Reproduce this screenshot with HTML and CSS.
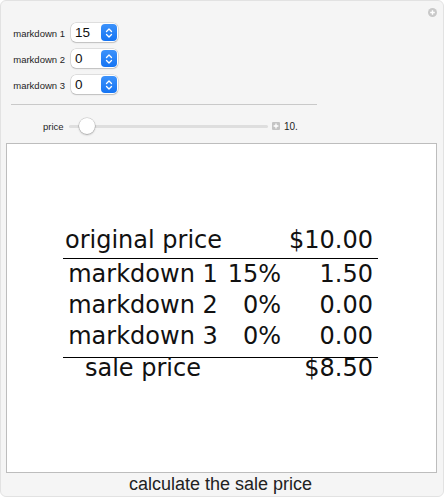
FILE: index.html
```html
<!DOCTYPE html>
<html>
<head>
<meta charset="utf-8">
<link rel="stylesheet" href="styles.css">
</head>
<body>
<div class="panel">
  <span class="corner-btn"><svg width="9" height="9" viewBox="0 0 9 9"><circle cx="4.5" cy="4.5" r="4.5" fill="#c9c9c9"/><path d="M4.5 2.2v4.6M2.2 4.5h4.6" stroke="#fff" stroke-width="1.4"/></svg></span>
  <div class="controls">
    <div class="ctrl-row">
      <span class="ctrl-label">markdown 1</span>
      <div class="select"><span class="sel-val">15</span><span class="sel-btn"><svg width="8" height="12" viewBox="0 0 8 12"><path d="M1.5 4.5L4 2l2.5 2.5M1.5 7.5L4 10l2.5-2.5" fill="none" stroke="#fff" stroke-width="1.3" stroke-linecap="round" stroke-linejoin="round"/></svg></span></div>
    </div>
    <div class="ctrl-row">
      <span class="ctrl-label">markdown 2</span>
      <div class="select"><span class="sel-val">0</span><span class="sel-btn"><svg width="8" height="12" viewBox="0 0 8 12"><path d="M1.5 4.5L4 2l2.5 2.5M1.5 7.5L4 10l2.5-2.5" fill="none" stroke="#fff" stroke-width="1.3" stroke-linecap="round" stroke-linejoin="round"/></svg></span></div>
    </div>
    <div class="ctrl-row">
      <span class="ctrl-label">markdown 3</span>
      <div class="select"><span class="sel-val">0</span><span class="sel-btn"><svg width="8" height="12" viewBox="0 0 8 12"><path d="M1.5 4.5L4 2l2.5 2.5M1.5 7.5L4 10l2.5-2.5" fill="none" stroke="#fff" stroke-width="1.3" stroke-linecap="round" stroke-linejoin="round"/></svg></span></div>
    </div>
    <div class="separator"></div>
    <div class="slider-row">
      <span class="slider-label">price</span>
      <div class="track"><span class="thumb"></span></div>
      <span class="plus-icon"><svg width="8" height="8" viewBox="0 0 8 8"><rect width="8" height="8" rx="1" fill="#c4c4c4"/><path d="M4 1.6v4.8M1.6 4h4.8" stroke="#fff" stroke-width="1.3"/></svg></span>
      <span class="slider-val">10.</span>
    </div>
  </div>
  <div class="output">
    <table class="calc">
      <colgroup><col class="c1"><col class="c2"><col class="c3"></colgroup>
      <tr class="r-orig"><td class="t1">original price</td><td class="t2"></td><td class="t3">$10.00</td></tr>
      <tr class="r-md"><td class="t1">markdown 1</td><td class="t2">15%</td><td class="t3">1.50</td></tr>
      <tr class="r-md"><td class="t1">markdown 2</td><td class="t2">0%</td><td class="t3">0.00</td></tr>
      <tr class="r-md r-last"><td class="t1">markdown 3</td><td class="t2">0%</td><td class="t3">0.00</td></tr>
      <tr class="r-sale"><td class="t1">sale price</td><td class="t2"></td><td class="t3">$8.50</td></tr>
    </table>
  </div>
  <div class="caption">calculate the sale price</div>
</div>
</body>
</html>
```
FILE: styles.css
```css
html, body {
  margin: 0;
  padding: 0;
  background: #ffffff;
}
body {
  font-family: "Liberation Sans", Arial, sans-serif;
  color: #1e1e1e;
}
.panel {
  position: relative;
  box-sizing: border-box;
  width: 444px;
  height: 497px;
  background: #f5f5f5;
  border: 1px solid #e2e2e2;
  border-radius: 6px;
  padding: 22px 6px 0 5px;
}
.corner-btn {
  position: absolute;
  top: 7px;
  right: 6px;
  width: 9px;
  height: 9px;
  display: block;
  line-height: 0;
}
.controls {
  padding-left: 5px;
  display: flex;
  flex-direction: column;
}
.ctrl-row {
  display: flex;
  align-items: center;
  height: 19px;
  margin-bottom: 7px;
}
.ctrl-label {
  width: 54px;
  text-align: right;
  font-size: 9.5px;
  margin-right: 6px;
  padding-top: 2px;
}
.select {
  position: relative;
  width: 47px;
  height: 19px;
  box-sizing: border-box;
  background: #fff;
  border-radius: 5px;
  box-shadow: 0 0 0 0.5px rgba(0,0,0,0.18), 0 1px 1.5px rgba(0,0,0,0.15);
  display: flex;
  align-items: center;
  justify-content: space-between;
  padding: 0 1px 0 4px;
}
.sel-val {
  font-size: 13.5px;
  color: #111;
}
.sel-btn {
  width: 16px;
  height: 17px;
  border-radius: 4px;
  background: linear-gradient(#3c92fb, #1574f3);
  display: flex;
  align-items: center;
  justify-content: center;
}
.separator {
  width: 306px;
  height: 1px;
  background: #c9c9c9;
  margin-top: 3px;
}
.slider-row {
  display: flex;
  align-items: center;
  height: 16px;
  margin-top: 13px;
  padding-left: 32px;
}
.slider-label {
  font-size: 9.5px;
  width: 21px;
  margin-right: 5px;
}
.track {
  position: relative;
  width: 199px;
  height: 3px;
  border-radius: 2px;
  background: #dedede;
}
.thumb {
  position: absolute;
  left: 10px;
  top: -7px;
  width: 16px;
  height: 16px;
  border-radius: 50%;
  background: #fff;
  box-shadow: 0 0 0 0.5px rgba(0,0,0,0.2), 0 1px 2px rgba(0,0,0,0.25);
}
.plus-icon {
  margin-left: 4px;
  width: 8px;
  height: 8px;
  line-height: 0;
}
.slider-val {
  margin-left: 4px;
  font-size: 10px;
}
.output {
  box-sizing: border-box;
  width: 431px;
  height: 330px;
  margin-top: 9px;
  background: #fff;
  border: 1px solid #bdbdbd;
  padding-top: 81px;
}
.calc {
  border-collapse: collapse;
  table-layout: fixed;
  width: 315px;
  margin-left: 56px;
  font-family: "DejaVu Sans", Verdana, sans-serif;
  font-size: 24px;
  color: #111;
}
.c1 { width: 162px; }
.c2 { width: 60px; }
.c3 { width: 93px; }
.calc td {
  padding: 0;
  white-space: nowrap;
  line-height: 31px;
}
.t1 { text-align: center; padding-left: 2px !important; padding-right: 4px !important; }
.t2 { text-align: right; padding-right: 4px !important; }
.t3 { text-align: right; padding-right: 5px !important; }
.r-orig td {
  padding-bottom: 2px;
  border-bottom: 1px solid #000;
}
.r-last td {
  padding-bottom: 5px;
  border-bottom: 1px solid #000;
}
.r-sale td {
  line-height: 20px;
}
.caption {
  text-align: center;
  font-size: 18px;
  color: #222;
  margin-top: 1px;
  padding-right: 2px;
}
```
